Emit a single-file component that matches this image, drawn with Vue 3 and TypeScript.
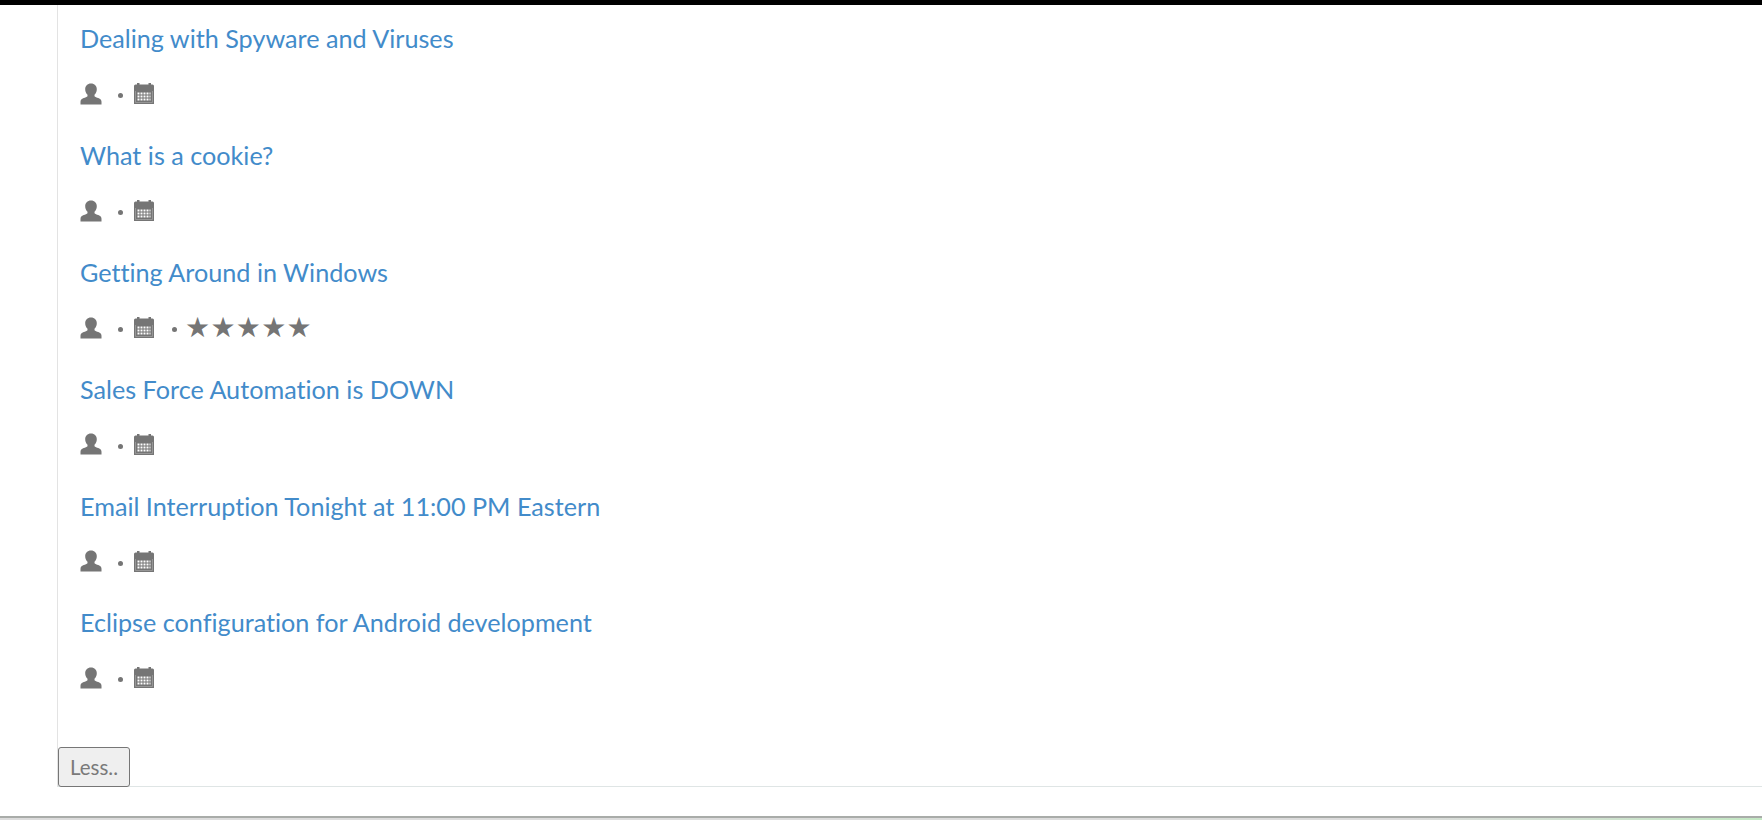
<script setup lang="ts">
interface Article {
  title: string;
  rated?: boolean;
}
const articles: Article[] = [
  { title: "Dealing with Spyware and Viruses" },
  { title: "What is a cookie?" },
  { title: "Getting Around in Windows", rated: true },
  { title: "Sales Force Automation is DOWN" },
  { title: "Email Interruption Tonight at 11:00 PM Eastern" },
  { title: "Eclipse configuration for Android development" },
];
</script>

<template>
  <div class="page">
    <div class="topbar"></div>
    <div class="panel">
      <ul class="list">
        <li v-for="a in articles" :key="a.title" class="item">
          <a class="title" href="#">{{ a.title }}</a>
          <div class="meta">
            <svg class="user" viewBox="0 0 22 22" width="22" height="22">
              <path fill="#757575" d="M11 .5c3.600 0 5.800 2.500 5.800 5.800 0 2.300-.9 4.200-2.300 5.400v1.500c.7.8 2.200 1.300 3.800 1.900 2.200.8 3.200 1.800 3.200 3.600v2.800H.5v-2.800c0-1.800 1-2.800 3.200-3.600 1.600-.6 3.100-1.100 3.800-1.900v-1.500C6.100 10.500 5.200 8.600 5.200 6.300 5.200 3 7.400.5 11 .5z"/>
            </svg>
            <span class="dot"></span>
            <svg class="cal" viewBox="0 0 20 21" width="20" height="21">
              <path fill="#757575" fill-rule="evenodd" d="M3 0h2.500v1.500h9V0H17v1.500h1.500A1.500 1.500 0 0 1 20 3v18H0V3a1.500 1.500 0 0 1 1.500-1.500H3zM1.500 8v11.500h17V8z"/>
              <path fill="#757575" d="M1.500 8h17v1.500h-17zM1.500 11.500h17v1h-17zM1.500 14.500h17v1h-17zM1.500 17.500h17v2h-17zM1.500 8h2v11.500h-2zM5.500 8h1v11.500h-1zM8.500 8h1v11.500h-1zM11.500 8h1v11.500h-1zM14.500 8h1v11.500h-1zM16.500 8h2v11.500h-2z"/>
            </svg>
            <template v-if="a.rated">
              <span class="dot second"></span>
              <span class="stars">★★★★★</span>
            </template>
          </div>
        </li>
      </ul>
      <button class="less" type="button">Less..</button>
    </div>
    <div class="bottombar"></div>
  </div>
</template>

<style>
html, body { margin: 0; background: #fff; overflow: hidden; }
</style>

<style scoped>
.page {
  height: 820px;
  display: flex;
  flex-direction: column;
  font-family: "Lato", "Open Sans", sans-serif;
  font-variant-ligatures: none;
  background: #fff;
}
.topbar { height: 5px; background: #000; flex: none; }
.panel {
  margin-left: 57px;
  height: 782px;
  box-sizing: border-box;
  border-left: 1px solid #e3e3e3;
  border-bottom: 1px solid #dfe5e5;
  display: flex;
  flex-direction: column;
  flex: none;
}
.list { list-style: none; margin: 0; padding: 0 0 0 22px; flex: 1; }
.item { height: 116.800px; display: flex; flex-direction: column; }
.title {
  margin-top: 17.400px;
  font-size: 25.200px;
  line-height: 32px;
  color: #428bca;
  text-decoration: none;
  align-self: flex-start;
}
.meta {
  margin-top: 28.600px;
  height: 22px;
  display: flex;
  align-items: center;
  color: #757575;
}
.user { flex: none; }
.dot {
  width: 5px;
  height: 5px;
  border-radius: 50%;
  background: #757575;
  margin: 4px 0 0 16px;
  flex: none;
}
.cal { margin-left: 11px; flex: none; }
.dot.second { margin-left: 18px; }
.stars {
  margin-left: 8px;
  font-family: "DejaVu Sans", sans-serif;
  font-size: 28px;
  letter-spacing: 0.300px;
  line-height: 22px;
  color: #757575;
}
.less {
  align-self: flex-start;
  width: 72px;
  height: 40px;
  margin-bottom: -1px;
  padding: 0;
  box-sizing: border-box;
  border: 1px solid #767676;
  border-radius: 3px;
  background: #efefef;
  color: #7a7a7a;
  font-family: inherit;
  font-size: 20.500px;
}
.bottombar {
  margin-top: auto;
  height: 4px;
  flex: none;
  background:
    linear-gradient(to bottom, #a9aca9 0 2px, transparent 2px),
    linear-gradient(to right, #dcdcdc 0 80%, #c4e8c4 100%);
}
</style>
